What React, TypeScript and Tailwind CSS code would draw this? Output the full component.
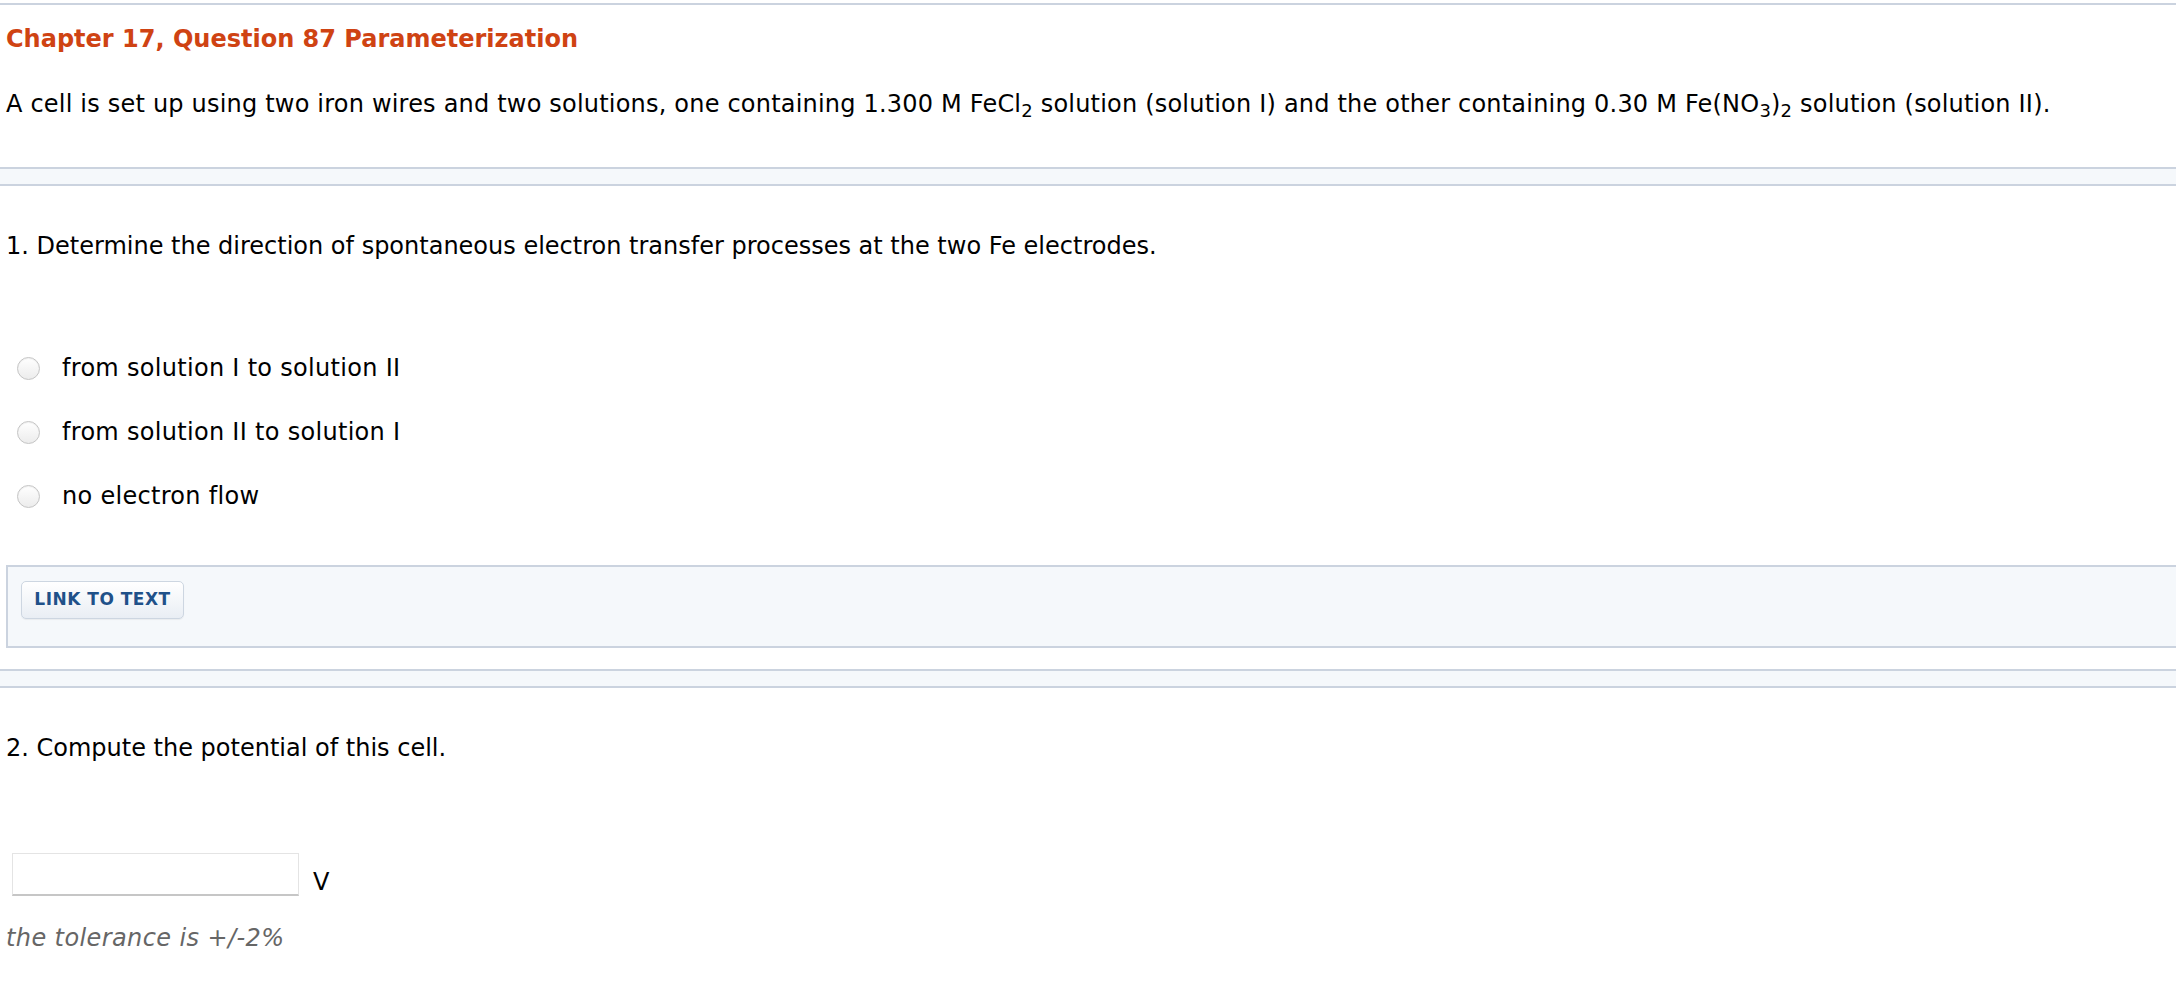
import React from "react";

function Radio() {
  return (
    <span className="inline-block shrink-0 w-[23px] h-[23px] rounded-full border border-[#c4c4c4] bg-gradient-to-b from-white to-[#ececec] shadow-[inset_0_1px_1px_rgba(0,0,0,0.06)]" />
  );
}

function Option({ label }: { label: string }) {
  return (
    <div className="flex items-center h-[28px] pl-[17px]">
      <Radio />
      <span className="ml-[22px] leading-[28px] tracking-[0.3px]">{label}</span>
    </div>
  );
}

function Band() {
  return <div className="h-[19px] border-t-2 border-b-2 border-[#cbd3df] bg-[#f5f8fb]" />;
}

export default function App() {
  return (
    <div
      className="min-h-[990px] bg-white text-black text-[24px]"
      style={{ fontFamily: '"DejaVu Sans", Verdana, sans-serif' }}
    >
      <div className="pt-[3px]">
        <div className="border-t-2 border-[#cbd3df]" />
      </div>
      <div className="pl-[6px]">
        <h1 className="mt-[20px] leading-[28px] font-bold text-[#cf4313] text-[24px]">
          Chapter 17, Question 87 Parameterization
        </h1>
        <p className="mt-[37px] leading-[28px] tracking-[0.2px]">
          A cell is set up using two iron wires and two solutions, one containing 1.300 M FeCl
          <sub className="text-[18px]">2</sub> solution (solution I) and the other containing 0.30 M Fe(NO
          <sub className="text-[18px]">3</sub>)<sub className="text-[18px]">2</sub> solution (solution II).
        </p>
      </div>
      <div className="mt-[49px]">
        <Band />
      </div>
      <div className="pl-[6px]">
        <p className="mt-[46px] leading-[28px]">
          1. Determine the direction of spontaneous electron transfer processes at the two Fe electrodes.
        </p>
      </div>
      <div className="mt-[94px] flex flex-col gap-[36px]">
        <Option label="from solution I to solution II" />
        <Option label="from solution II to solution I" />
        <Option label="no electron flow" />
      </div>
      <div className="mt-[55px] ml-[6px] h-[83px] border-2 border-r-0 border-[#cbd3df] bg-[#f5f8fb] pt-[12px] pl-[13px]">
        <button className="h-[38px] w-[163px] rounded-[5px] border border-[#cdd6e1] bg-gradient-to-b from-white to-[#e9eef4] text-[#1f5189] font-bold text-[17px] tracking-[0.5px] shadow-[0_1px_1px_rgba(0,0,0,0.05)]">
          LINK TO TEXT
        </button>
      </div>
      <div className="mt-[21px]">
        <Band />
      </div>
      <div className="pl-[6px]">
        <p className="mt-[46px] leading-[28px]">2. Compute the potential of this cell.</p>
        <div className="mt-[91px] flex items-end">
          <input
            type="text"
            className="ml-[6px] w-[287px] h-[43px] border border-[#e4e4e4] border-b-[#c6c6c6] border-b-2 bg-white outline-none"
          />
          <span className="ml-[14px] leading-[28px]">V</span>
        </div>
        <p className="mt-[28px] leading-[28px] italic text-[#666666] tracking-[0.4px]">the tolerance is +/-2%</p>
      </div>
    </div>
  );
}
